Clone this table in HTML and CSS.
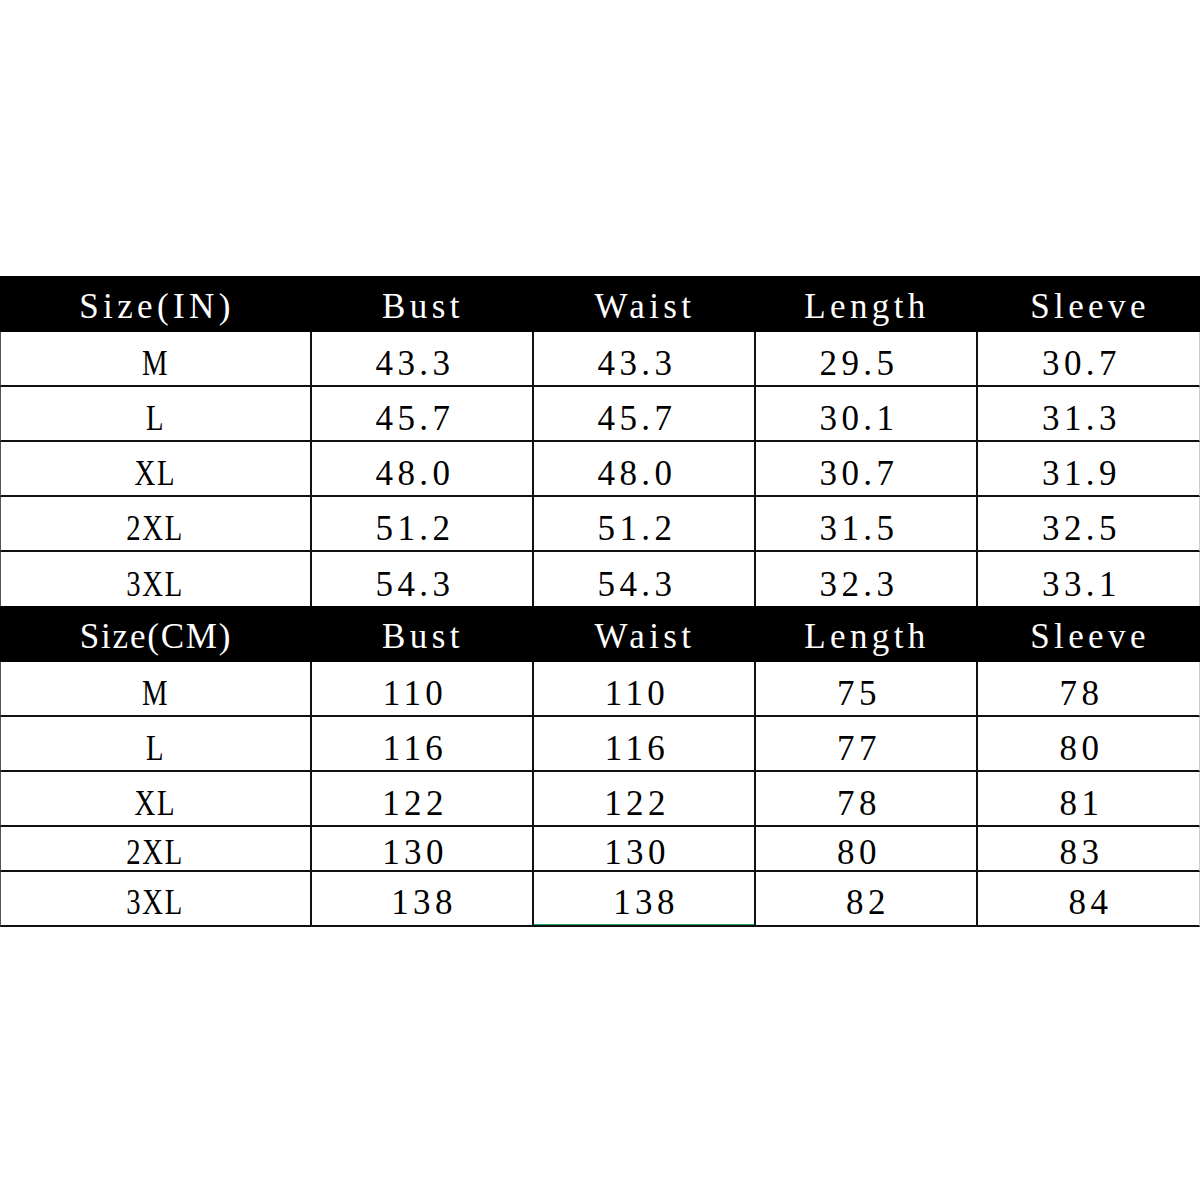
FILE: index.html
```html
<!DOCTYPE html>
<html lang="en">
<head>
<meta charset="utf-8">
<title>Size Chart</title>
<link rel="stylesheet" href="styles.css">
</head>
<body>
<div class="page">
  <div class="chart">
    <div class="row head">
      <div class="cell">Size(IN)</div><div class="cell">Bust</div><div class="cell">Waist</div><div class="cell">Length</div><div class="cell">Sleeve</div>
    </div>
    <div class="row data">
      <div class="cell size"><span>M</span></div><div class="cell">43.3</div><div class="cell">43.3</div><div class="cell">29.5</div><div class="cell">30.7</div>
    </div>
    <div class="row data">
      <div class="cell size"><span>L</span></div><div class="cell">45.7</div><div class="cell">45.7</div><div class="cell">30.1</div><div class="cell">31.3</div>
    </div>
    <div class="row data">
      <div class="cell size"><span>XL</span></div><div class="cell">48.0</div><div class="cell">48.0</div><div class="cell">30.7</div><div class="cell">31.9</div>
    </div>
    <div class="row data">
      <div class="cell size"><span>2XL</span></div><div class="cell">51.2</div><div class="cell">51.2</div><div class="cell">31.5</div><div class="cell">32.5</div>
    </div>
    <div class="row data before-head">
      <div class="cell size"><span>3XL</span></div><div class="cell">54.3</div><div class="cell">54.3</div><div class="cell">32.3</div><div class="cell">33.1</div>
    </div>
    <div class="row head">
      <div class="cell tight">Size(CM)</div><div class="cell">Bust</div><div class="cell">Waist</div><div class="cell">Length</div><div class="cell">Sleeve</div>
    </div>
    <div class="row data">
      <div class="cell size"><span>M</span></div><div class="cell">110</div><div class="cell">110</div><div class="cell">75</div><div class="cell">78</div>
    </div>
    <div class="row data">
      <div class="cell size"><span>L</span></div><div class="cell">116</div><div class="cell">116</div><div class="cell">77</div><div class="cell">80</div>
    </div>
    <div class="row data">
      <div class="cell size"><span>XL</span></div><div class="cell">122</div><div class="cell">122</div><div class="cell">78</div><div class="cell">81</div>
    </div>
    <div class="row data short">
      <div class="cell size"><span>2XL</span></div><div class="cell">130</div><div class="cell">130</div><div class="cell">80</div><div class="cell">83</div>
    </div>
    <div class="row data last">
      <div class="cell size"><span>3XL</span></div><div class="cell">138</div><div class="cell mark">138</div><div class="cell">82</div><div class="cell">84</div>
    </div>
  </div>
</div>
</body>
</html>
```

FILE: styles.css
```css
html, body {
  margin: 0;
  padding: 0;
  background: #ffffff;
}

.page {
  width: 1200px;
  height: 1200px;
  padding-top: 276px;
  box-sizing: border-box;
}

.chart {
  width: 1200px;
  font-family: "Liberation Serif", "Times New Roman", serif;
  font-size: 35px;
  letter-spacing: 4.4px;
  color: #000;
}

.row {
  display: grid;
  grid-template-columns: 310px 222px 222px 222px 224px;
  box-sizing: border-box;
}

.cell {
  display: flex;
  align-items: center;
  justify-content: center;
  box-sizing: border-box;
  white-space: nowrap;
}

/* header rows */
.head {
  height: 56px;
  background: #000;
  color: #fff;
}
.head .cell {
  padding-top: 6px;
  padding-left: 4px;
}
.head .cell.tight {
  letter-spacing: 1.8px;
  padding-left: 2px;
}

/* data rows */
.data {
  height: 55px;
  grid-template-columns: 309px 222px 222px 222px 1fr;
  border-bottom: 2px solid #111;
  border-left: 1px solid #555;
  border-right: 1px solid #ccc;
}
.data .cell {
  padding-top: 11px;
  padding-right: 14px;
}
.data .cell + .cell {
  border-left: 2px solid #111;
}
.data .cell.size {
  padding-right: 0;
  padding-left: 0;
  letter-spacing: 2px;
}
.cell.size span {
  display: inline-block;
  transform: scaleX(0.82);
}

.before-head {
  height: 54px;
  border-bottom: 0;
}

.short {
  height: 45px;
}
.data.short .cell {
  padding-top: 6px;
}

.last {
  height: 55px;
}
.data.last .cell {
  padding-top: 8px;
  padding-right: 0;
  padding-left: 4px;
}
.data.last .cell.size {
  padding-left: 0;
}
.last .cell.mark {
  box-shadow: inset 0 -1px 0 #1fa763;
}
```
